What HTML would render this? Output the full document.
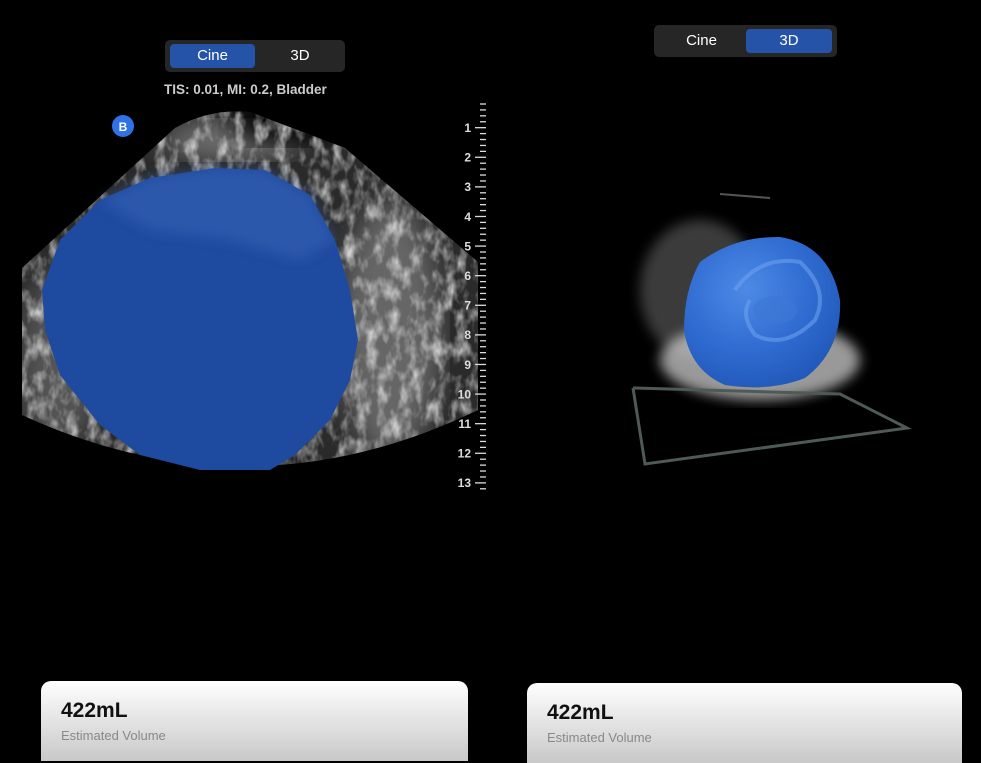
<!DOCTYPE html>
<html><head><meta charset="utf-8"><style>
body{margin:0;background:#000;width:981px;height:744px;overflow:hidden;position:relative;font-family:"Liberation Sans",sans-serif}
.seg{position:absolute;background:#262626;border-radius:5px;height:32px}
.seg div{position:absolute;top:4px;height:24px;line-height:24px;text-align:center;color:#fff;font-size:15px;border-radius:4px}
.card{position:absolute;background:linear-gradient(#fff,#c8c8c8);border-radius:10px 10px 0 0;height:80px}
.card .v{position:absolute;left:20px;top:18px;font-size:21px;color:#111;font-weight:bold}
.card .l{position:absolute;left:20px;top:47px;font-size:13px;color:#888}
</style></head><body>
<div class="seg" style="left:165px;top:40px;width:180px"><div style="left:5px;width:85px;background:#2553a8">Cine</div><div style="left:95px;width:80px">3D</div></div>
<div class="seg" style="left:654px;top:25px;width:183px"><div style="left:5px;width:85px">Cine</div><div style="left:92px;width:86px;background:#2553a8">3D</div></div>
<div style="position:absolute;left:164px;top:82px;color:#ccc;font-size:13.5px;font-weight:bold">TIS: 0.01, MI: 0.2, Bladder</div>
<svg width="981" height="744" style="position:absolute;left:0;top:0">
<defs>
<filter id="n" x="0" y="0" width="100%" height="100%"><feTurbulence type="fractalNoise" baseFrequency="0.09 0.05" numOctaves="3" seed="5"/><feColorMatrix type="matrix" values="0 0 0 0 0.8 0 0 0 0 0.8 0 0 0 0 0.8 1.8 0 0 0 -0.75"/><feComposite in2="SourceGraphic" operator="in"/></filter>
<filter id="b"><feGaussianBlur stdDeviation="6"/></filter>
<filter id="b2"><feGaussianBlur stdDeviation="14"/></filter>
<radialGradient id="g3" cx="0.4" cy="0.35" r="0.7"><stop offset="0" stop-color="#4d8ae6"/><stop offset="0.6" stop-color="#2f6bd0"/><stop offset="1" stop-color="#2158b8"/></radialGradient>
<clipPath id="sc"><path d="M22,268 L175,128 Q210,108 250,112 L345,148 L478,262 L478,410 Q250,520 22,415 Z"/></clipPath>
</defs>
<g clip-path="url(#sc)">
<rect x="0" y="100" width="490" height="400" fill="#2a2a2a"/>
<ellipse cx="390" cy="330" rx="50" ry="130" fill="#666" filter="url(#b2)"/>
<ellipse cx="60" cy="360" rx="40" ry="90" fill="#555" filter="url(#b2)"/>
<ellipse cx="230" cy="140" rx="70" ry="18" fill="#777" filter="url(#b2)"/>
<ellipse cx="290" cy="118" rx="60" ry="25" fill="#000" filter="url(#b2)"/>
<rect x="0" y="100" width="490" height="400" fill="#888" filter="url(#n)"/>
</g>
<polygon points="215,168 265,170 310,195 335,240 350,290 358,340 350,380 330,420 295,455 270,470 200,470 140,455 100,425 60,375 45,330 42,290 60,240 100,200 150,178" fill="#1e4aa0"/>
<polygon points="215,168 265,170 310,195 335,240 300,260 230,240 150,230 100,200 150,178" fill="#3a66b6" opacity="0.5" filter="url(#b)"/>
<circle cx="123" cy="126" r="11" fill="#2f72e6"/>
<text x="123" y="131" fill="#fff" font-size="12" font-weight="bold" text-anchor="middle" font-family="Liberation Sans">B</text>
<g stroke="#ddd" stroke-width="1.3" id="r"></g>
<g fill="#ddd" font-size="12" font-weight="bold" text-anchor="end" font-family="Liberation Sans" id="rl"></g>
<ellipse cx="700" cy="290" rx="60" ry="70" fill="#777" opacity="0.5" filter="url(#b)"/>
<ellipse cx="760" cy="360" rx="100" ry="40" fill="#ccc" opacity="0.75" filter="url(#b)"/>
<polyline points="633,388 840,394 907,428 645,464 633,388" fill="none" stroke="#4e5a55" stroke-width="3"/>
<line x1="720" y1="194" x2="770" y2="198" stroke="#555" stroke-width="2"/>
<path d="M700,262 Q735,236 780,237 Q830,245 840,300 Q842,350 805,378 Q770,392 725,385 Q690,370 684,330 Q684,290 700,262 Z" fill="url(#g3)"/>
<path d="M735,290 Q760,255 800,262 Q830,290 815,320 Q785,350 755,335 Q740,315 750,300" fill="none" stroke="#6aa0ee" stroke-width="4" opacity="0.6"/>
<ellipse cx="775" cy="310" rx="22" ry="14" fill="#3d78d6" opacity="0.7"/>
</svg>
<div class="card" style="left:41px;top:681px;width:427px"><div class="v">422mL</div><div class="l">Estimated Volume</div></div>
<div class="card" style="left:527px;top:683px;width:435px"><div class="v">422mL</div><div class="l">Estimated Volume</div></div>
<script>
var r=document.getElementById('r'),rl=document.getElementById('rl'),s='';var t='';
for(var i=0;i<=65;i++){var y=104+i*5.92;var maj=(i%5==4);s+='<line x1="'+(maj?475:480)+'" y1="'+y+'" x2="486" y2="'+y+'"/>';}
for(var k=1;k<=13;k++){var y=128+(k-1)*29.6;t+='<text x="471" y="'+(y+4)+'">'+k+'</text>';}
r.innerHTML=s;rl.innerHTML=t;
</script>
</body></html>
